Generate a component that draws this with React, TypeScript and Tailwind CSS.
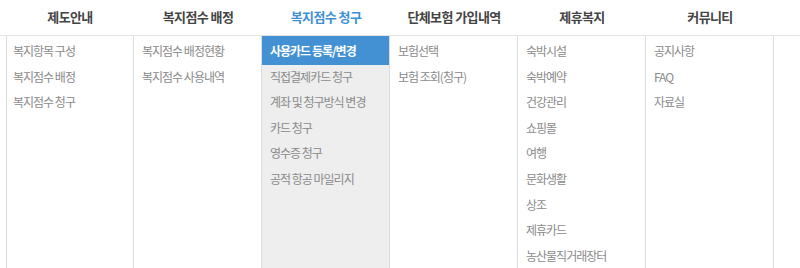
import React from "react";

const menus = [
  { title: "제도안내", items: ["복지항목 구성", "복지점수 배정", "복지점수 청구"] },
  { title: "복지점수 배정", items: ["복지점수 배정현황", "복지점수 사용내역"] },
  {
    title: "복지점수 청구",
    active: true,
    items: ["사용카드 등록/변경", "직접결제카드 청구", "계좌 및 청구방식 변경", "카드 청구", "영수증 청구", "공적 항공 마일리지"],
  },
  { title: "단체보험 가입내역", items: ["보험선택", "보험 조회(청구)"] },
  {
    title: "제휴복지",
    items: ["숙박시설", "숙박예약", "건강관리", "쇼핑몰", "여행", "문화생활", "상조", "제휴카드", "농산물직거래장터"],
  },
  { title: "커뮤니티", items: ["공지사항", "FAQ", "자료실"] },
];

export default function App() {
  return (
    <div
      className="h-[268px] w-[800px] overflow-hidden bg-white"
      style={{ fontFamily: '"Noto Sans CJK KR", "Noto Sans", sans-serif' }}
    >
      {/* 상단 메뉴 */}
      <div className="flex h-[36px] border-b border-[#e2e2e2] pl-[6px]">
        {menus.map((m) => (
          <div
            key={m.title}
            className={`flex w-[128px] items-center justify-center pb-[2px] text-[13px] font-semibold tracking-[-0.6px] ${
              m.active ? "text-[#3f90d3]" : "text-[#444]"
            }`}
          >
            {m.title}
          </div>
        ))}
      </div>

      {/* 하위 메뉴 */}
      <div className="flex h-[232px] pl-[6px]">
        {menus.map((m, i) => (
          <ul
            key={m.title}
            className={`w-[128px] border-r border-[#dcdcdc] pt-[2px] ${i === 0 ? "border-l pl-[-1px]" : ""} ${
              m.active ? "bg-[#eeeeee]" : ""
            }`}
          >
            {m.items.map((it, j) =>
              m.active && j === 0 ? (
                <li
                  key={it}
                  className="-mt-[2px] mb-[-1.4px] h-[29px] bg-[#4391d2] pl-[8px] text-[12px] font-semibold leading-[29px] tracking-[-1px] text-white"
                >
                  {it}
                </li>
              ) : (
                <li
                  key={it}
                  className={`h-[25.6px] text-[12px] leading-[25.6px] tracking-[-1px] text-[#8a8a8a] ${
                    i === 0 ? "pl-[6px]" : "pl-[8px]"
                  }`}
                >
                  {it}
                </li>
              )
            )}
          </ul>
        ))}
      </div>
    </div>
  );
}
